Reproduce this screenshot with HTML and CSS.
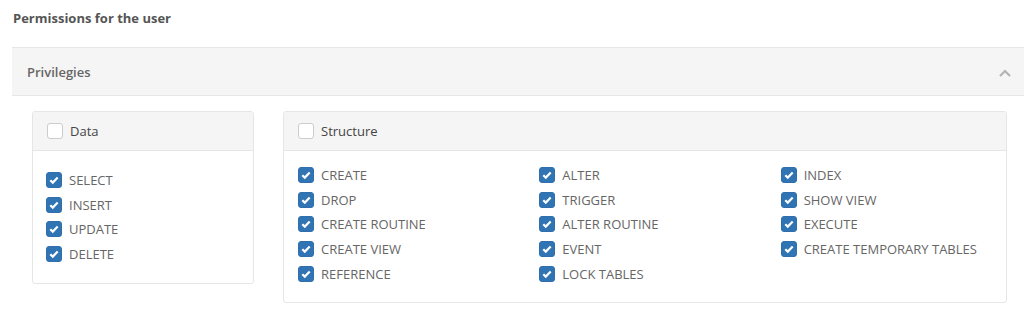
FILE: index.html
```html
<!DOCTYPE html>
<html>
<head>
    <meta charset="utf-8">
    <title>Permissions for the user</title>
    <link rel="stylesheet" href="styles.css">
</head>
<body>
<div class="page">
    <h4 class="page-title">Permissions for the user</h4>

    <div class="accordion">
        <div class="accordion-head">
            <span>Privilegies</span>
            <svg class="chevron" width="12" height="8" viewBox="0 0 12 8">
                <path d="M1 7 L6 2 L11 7" fill="none" stroke="#b4b4b4" stroke-width="2.2"/>
            </svg>
        </div>
        <div class="accordion-body">
            <div class="panel panel-data">
                <div class="panel-head">
                    <span class="box"></span>
                    <span>Data</span>
                </div>
                <div class="panel-body">
                    <div class="col">
                        <label class="item"><span class="box checked"></span>SELECT</label>
                        <label class="item"><span class="box checked"></span>INSERT</label>
                        <label class="item"><span class="box checked"></span>UPDATE</label>
                        <label class="item"><span class="box checked"></span>DELETE</label>
                    </div>
                </div>
            </div>

            <div class="panel panel-structure">
                <div class="panel-head">
                    <span class="box"></span>
                    <span>Structure</span>
                </div>
                <div class="panel-body cols">
                    <div class="col">
                        <label class="item"><span class="box checked"></span>CREATE</label>
                        <label class="item"><span class="box checked"></span>DROP</label>
                        <label class="item"><span class="box checked"></span>CREATE ROUTINE</label>
                        <label class="item"><span class="box checked"></span>CREATE VIEW</label>
                        <label class="item"><span class="box checked"></span>REFERENCE</label>
                    </div>
                    <div class="col">
                        <label class="item"><span class="box checked"></span>ALTER</label>
                        <label class="item"><span class="box checked"></span>TRIGGER</label>
                        <label class="item"><span class="box checked"></span>ALTER ROUTINE</label>
                        <label class="item"><span class="box checked"></span>EVENT</label>
                        <label class="item"><span class="box checked"></span>LOCK TABLES</label>
                    </div>
                    <div class="col">
                        <label class="item"><span class="box checked"></span>INDEX</label>
                        <label class="item"><span class="box checked"></span>SHOW VIEW</label>
                        <label class="item"><span class="box checked"></span>EXECUTE</label>
                        <label class="item"><span class="box checked"></span>CREATE TEMPORARY TABLES</label>
                    </div>
                </div>
            </div>
        </div>
    </div>
</div>
</body>
</html>
```

FILE: styles.css
```css
html, body {
    margin: 0;
    overflow: hidden;
}
body {
    font-family: "Open Sans", Arial, sans-serif;
    font-size: 13px;
    color: #333;
    background-color: #fff;
}
.page {
    padding: 8px 0 0 12px;
}
.page-title {
    margin: 0 0 19px 1px;
    font-size: 13px;
    line-height: 20px;
    font-weight: 700;
    color: #555;
}
.accordion {
    width: 1016px;
}
.accordion-head {
    display: flex;
    align-items: center;
    justify-content: space-between;
    height: 47px;
    padding: 0 14px 0 15px;
    background-color: #f5f5f5;
    border-top: 1px solid #e6e6e6;
    border-bottom: 1px solid #e6e6e6;
    font-weight: 600;
    color: #666;
}
.chevron {
    margin-right: 3px;
    margin-top: 2px;
}
.accordion-body {
    display: flex;
    gap: 29px;
    padding: 15px 20px;
}
.panel {
    border: 1px solid #e6e6e6;
    border-radius: 3px;
    box-sizing: border-box;
    align-self: flex-start;
}
.panel-data {
    width: 222px;
}
.panel-structure {
    width: 724px;
}
.panel-head {
    display: flex;
    align-items: center;
    gap: 7px;
    height: 38px;
    padding: 0 14px;
    background-color: #f5f5f5;
    border-bottom: 1px solid #e6e6e6;
    border-radius: 3px 3px 0 0;
    color: #444;
}
.panel-body {
    padding: 19px 14px 19px 13px;
}
.panel-structure .panel-body {
    padding: 14px 14px 18px;
}
.cols {
    display: grid;
    grid-template-columns: repeat(3, 1fr);
    column-gap: 30px;
}
.col {
    display: flex;
    flex-direction: column;
    gap: 4.7px;
}
.item {
    display: flex;
    align-items: center;
    gap: 7px;
    height: 20px;
    color: #666;
    white-space: nowrap;
}
.box {
    display: inline-block;
    width: 16px;
    height: 16px;
    box-sizing: border-box;
    border: 1px solid #ccc;
    border-radius: 3px;
    background-color: #fff;
    flex: none;
}
.box.checked {
    border-color: #2f6fae;
    background: #3174b3 url("data:image/svg+xml;utf8,<svg xmlns='http://www.w3.org/2000/svg' width='16' height='16' viewBox='0 0 16 16'><path d='M4.3 8.2 L6.8 10.6 L11.7 5.6' fill='none' stroke='white' stroke-width='2.2'/></svg>") center no-repeat;
}
```
